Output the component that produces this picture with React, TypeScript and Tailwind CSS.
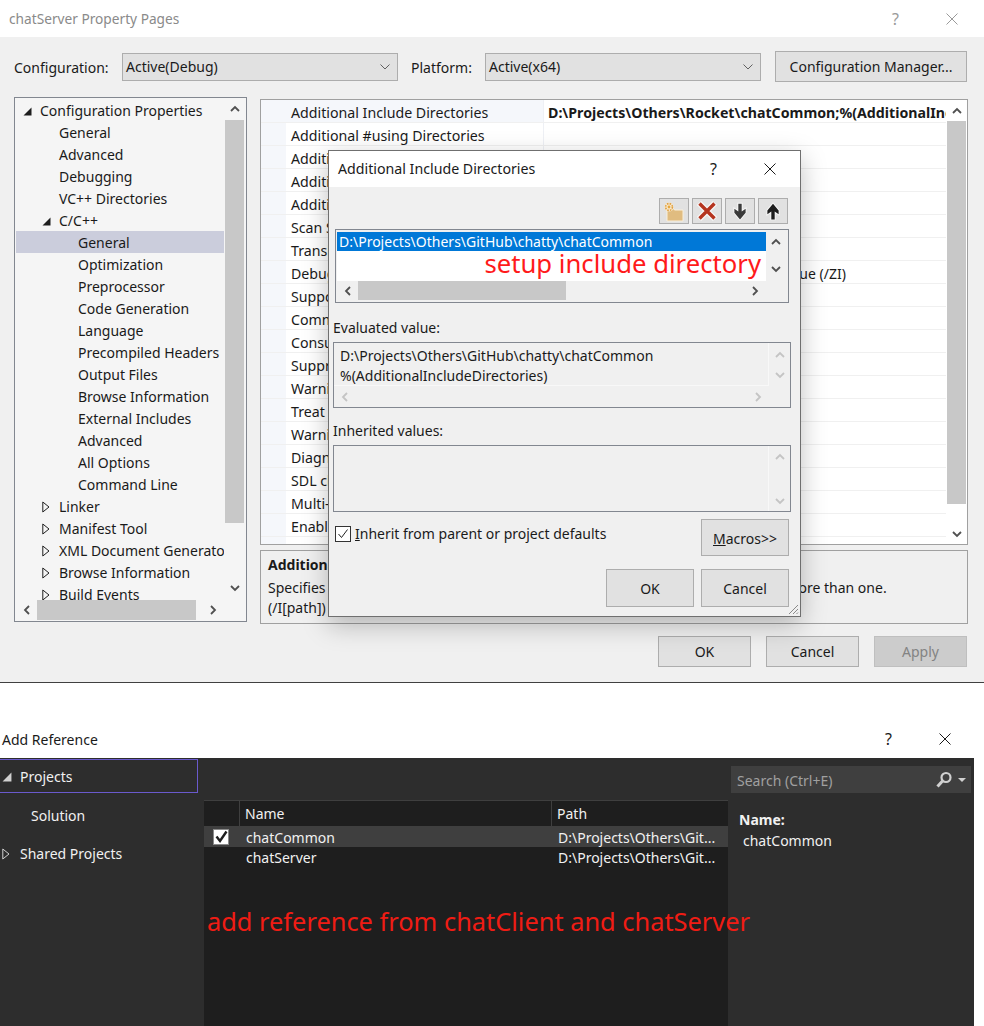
import * as React from "react";

const treeRows: { label: string; indent: number; arrow?: "open" | "closed"; selected?: boolean }[] = [
  { label: "Configuration Properties", indent: 24, arrow: "open" },
  { label: "General", indent: 43 },
  { label: "Advanced", indent: 43 },
  { label: "Debugging", indent: 43 },
  { label: "VC++ Directories", indent: 43 },
  { label: "C/C++", indent: 43, arrow: "open" },
  { label: "General", indent: 62, selected: true },
  { label: "Optimization", indent: 62 },
  { label: "Preprocessor", indent: 62 },
  { label: "Code Generation", indent: 62 },
  { label: "Language", indent: 62 },
  { label: "Precompiled Headers", indent: 62 },
  { label: "Output Files", indent: 62 },
  { label: "Browse Information", indent: 62 },
  { label: "External Includes", indent: 62 },
  { label: "Advanced", indent: 62 },
  { label: "All Options", indent: 62 },
  { label: "Command Line", indent: 62 },
  { label: "Linker", indent: 43, arrow: "closed" },
  { label: "Manifest Tool", indent: 43, arrow: "closed" },
  { label: "XML Document Generator", indent: 43, arrow: "closed" },
  { label: "Browse Information", indent: 43, arrow: "closed" },
  { label: "Build Events", indent: 43, arrow: "closed" },
];

const gridRows = [
  "Additional Include Directories",
  "Additional #using Directories",
  "Additional BMI Directories",
  "Additional Module Dependencies",
  "Additional Header Unit Dependencies",
  "Scan Sources for Module Dependencies",
  "Translate Includes to Imports",
  "Debug Information Format",
  "Support Just My Code Debugging",
  "Common Language RunTime Support",
  "Consume Windows Runtime Extension",
  "Suppress Startup Banner",
  "Warning Level",
  "Treat Warnings As Errors",
  "Warning Version",
  "Diagnostics Format",
  "SDL checks",
  "Multi-processor Compilation",
  "Enable Address Sanitizer",
  "Enable Fuzzer Support",
];

function Chevron({ dir, color = "#505050", size = 10 }: { dir: "up" | "down" | "left" | "right"; color?: string; size?: number }) {
  const d = {
    up: "M1 7 L5 3 L9 7",
    down: "M1 3 L5 7 L9 3",
    left: "M7 1 L3 5 L7 9",
    right: "M3 1 L7 5 L3 9",
  }[dir];
  return (
    <svg width={size} height={size} viewBox="0 0 10 10" fill="none">
      <path d={d} stroke={color} strokeWidth="1.8" />
    </svg>
  );
}

function Triangle({ open, color = "#1e1e1e", size = 9 }: { open: boolean; color?: string; size?: number }) {
  return open ? (
    <svg width={size} height={size} viewBox="0 0 9 9">
      <path d="M8.5 0.5 V8.5 H0.5 Z" fill={color} />
    </svg>
  ) : (
    <svg width="8" height="12" viewBox="0 0 8 12" fill="none">
      <path d="M0.8 1 L7 6 L0.8 11 Z" stroke={color} strokeWidth="1" />
    </svg>
  );
}

function SelectBox({ value, className }: { value: string; className: string }) {
  return (
    <div className={`flex h-[28px] items-center justify-between border border-[#adadad] bg-[#e1e1e1] pl-[3px] pr-[6px] ${className}`}>
      <span className="pt-[1px]">{value}</span>
      <svg width="12" height="8" viewBox="0 0 12 8" fill="none">
        <path d="M1.5 1.5 L6 6 L10.5 1.5" stroke="#606060" strokeWidth="1" />
      </svg>
    </div>
  );
}

function Btn({ label, className, disabled }: { label: React.ReactNode; className: string; disabled?: boolean }) {
  return (
    <div
      className={`flex items-center justify-center border ${disabled ? "border-[#bfbfbf] bg-[#cccccc] text-[#838383]" : "border-[#adadad] bg-[#e1e1e1]"} ${className}`}
    >
      {label}
    </div>
  );
}

function TitleButtons({ muted, className }: { muted?: boolean; className: string }) {
  const color = muted ? "#9a9a9a" : "#1a1a1a";
  return (
    <div className={`flex items-center ${className}`}>
      <span className="text-[16px]" style={{ color }}>
        ?
      </span>
      <svg width="12" height="12" viewBox="0 0 12 12" fill="none" className="ml-[47px]">
        <path d="M0.5 0.5 L11.5 11.5 M11.5 0.5 L0.5 11.5" stroke={color} strokeWidth="1" />
      </svg>
    </div>
  );
}

function ToolButton({ children }: { children: React.ReactNode }) {
  return <div className="flex h-[26px] w-[30px] items-center justify-center border border-[#adadad] bg-[#e1e1e1]">{children}</div>;
}

function App() {
  return (
    <div className="h-[1026px] w-[984px] overflow-hidden bg-white text-[14px] leading-none text-[#1a1a1a] [font-family:'Noto_Sans',sans-serif]">
      {/* property pages */}
      <div className="relative flex h-[683px] flex-col border-b border-[#404040] bg-[#f0f0f0]">
        <div className="flex h-[37px] shrink-0 items-center justify-between bg-white pl-[9px] pr-[26px] text-[13.7px] text-[#8a8a8a]">
          <span>chatServer Property Pages</span>
          <TitleButtons muted className="" />
        </div>

        <div className="mt-[14px] flex h-[31px] items-center pl-[14px]">
          <span className="w-[108px] pt-[2px]">Configuration:</span>
          <SelectBox value="Active(Debug)" className="w-[276px]" />
          <span className="ml-[13px] w-[74px] pt-[2px]">Platform:</span>
          <SelectBox value="Active(x64)" className="w-[276px]" />
          <Btn label="Configuration Manager..." className="ml-[14px] h-[31px] w-[192px]" />
        </div>

        <div className="mt-[15px] flex items-start pl-[14px]">
          {/* tree */}
          <div className="flex h-[525px] w-[233px] shrink-0 flex-col border border-[#828790] bg-[#f5f5f5]">
            <div className="flex h-[502px] pl-[1px] pr-[2px]">
              <div className="h-full w-[208px] overflow-hidden pt-[1px]">
                {treeRows.map((row, i) => (
                  <div
                    key={i}
                    className={`relative flex h-[22px] items-center whitespace-nowrap pt-[2px] ${row.selected ? "bg-[#cbcddc]" : ""}`}
                    style={{ paddingLeft: row.indent }}
                  >
                    {row.arrow && (
                      <span className="absolute flex w-[10px] justify-center" style={{ left: row.indent - 18 }}>
                        <Triangle open={row.arrow === "open"} />
                      </span>
                    )}
                    {row.label}
                  </div>
                ))}
              </div>
              <div className="ml-[1px] flex h-full w-[19px] flex-col items-center">
                <div className="flex h-[22px] items-center">
                  <Chevron dir="up" />
                </div>
                <div className="h-[403px] w-full bg-[#c8c8c8]" />
                <div className="flex flex-1 items-end pb-[7px]">
                  <Chevron dir="down" />
                </div>
              </div>
            </div>
            <div className="ml-[1px] flex h-[20px] w-[208px] items-center">
              <div className="flex w-[21px] justify-center">
                <Chevron dir="left" />
              </div>
              <div className="h-full w-[159px] bg-[#c8c8c8]" />
              <div className="flex flex-1 justify-center pl-[6px]">
                <Chevron dir="right" />
              </div>
            </div>
          </div>

          <div className="ml-[13px] mt-[2px] w-[708px]">
            {/* grid */}
            <div className="flex h-[446px] border border-[#a0a0a0] bg-white">
              <div className="h-full w-[685px] overflow-hidden">
                {gridRows.map((name, i) => (
                  <div key={name} className="flex h-[23px] border-b border-[#f0f0f0]">
                    <div className="h-full w-[25px] shrink-0 bg-[#f5f7fb]" />
                    <div
                      className={`flex w-[258px] shrink-0 items-center whitespace-nowrap border-r border-[#eef0f5] pl-[5px] pt-[4px] text-[14.2px] ${i === 0 ? "bg-[#f5f7fb]" : ""}`}
                    >
                      {name}
                    </div>
                    {i === 0 && (
                      <div className="flex items-center overflow-hidden whitespace-nowrap pl-[4px] pt-[4px] text-[14.2px] font-bold">
                        {"D:\\Projects\\Others\\Rocket\\chatCommon;%(AdditionalIncludeDirectories)"}
                      </div>
                    )}
                    {i === 7 && <div className="flex items-center whitespace-nowrap pl-[4px] pt-[4px]">Program Database for Edit And Continue (/ZI)</div>}
                  </div>
                ))}
              </div>
              <div className="ml-[1px] flex h-full w-[19px] flex-col items-center">
                <div className="flex h-[21px] items-center">
                  <Chevron dir="up" />
                </div>
                <div className="h-[383px] w-full bg-[#c8c8c8]" />
                <div className="flex flex-1 items-end pb-[5px]">
                  <Chevron dir="down" />
                </div>
              </div>
            </div>
            {/* description */}
            <div className="mt-[5px] h-[74px] border border-[#a0a0a0] pl-[7px] pt-[7px]">
              <div className="font-bold">Additional Include Directories</div>
              <div className="mt-[9px] whitespace-nowrap">Specifies one or more directories to add to the include path; separate using ; if more than one.</div>
              <div className="mt-[6px]">(/I[path])</div>
            </div>
          </div>
        </div>

        <div className="mt-[12px] flex justify-end pr-[17px]">
          <Btn label="OK" className="h-[31px] w-[93px]" />
          <Btn label="Cancel" className="ml-[15px] h-[31px] w-[93px]" />
          <Btn label="Apply" disabled className="ml-[15px] h-[31px] w-[93px]" />
        </div>

        {/* modal over the property pages */}
        <div className="absolute left-[328px] top-[150px] h-[467px] w-[473px] border border-[#6f6f6f] bg-[#f0f0f0] px-[4px] shadow-[0_8px_24px_rgba(0,0,0,0.25)]">
          <div className="-mx-[4px] flex h-[36px] items-center justify-between bg-white pl-[9px] pr-[24px]">
            <span className="text-[14.2px]">Additional Include Directories</span>
            <TitleButtons className="" />
          </div>
          <div className="mt-[11px] flex justify-end gap-[3px] pr-[8px]">
            <ToolButton>
              <svg width="24" height="22" viewBox="0 0 24 22">
                <path d="M5 8 H11 L12.5 10 H21 V21 H5 Z" fill="#e0bc80" stroke="#f8efdc" strokeWidth="1" />
                <circle cx="7" cy="7" r="4.6" fill="#f6e8cf" />
                <circle cx="7" cy="7" r="3.4" fill="none" stroke="#e0a040" strokeWidth="1.6" strokeDasharray="1.6 1.1" />
                <circle cx="7" cy="7" r="1.4" fill="#e8a83c" />
              </svg>
            </ToolButton>
            <ToolButton>
              <svg width="22" height="22" viewBox="0 0 22 22">
                <path d="M3 3 L19 19 M19 3 L3 19" stroke="#f8f8f8" strokeWidth="6" />
                <path d="M3.5 3.5 L18.5 18.5 M18.5 3.5 L3.5 18.5" stroke="#b5341f" strokeWidth="3.4" />
              </svg>
            </ToolButton>
            <ToolButton>
              <svg width="18" height="23" viewBox="0 0 16 20">
                <path d="M6.5 3 H9.5 V10 L13 7.5 V11 L8 17 L3 11 V7.5 L6.5 10 Z" fill="#3a3a3a" stroke="#f8f8f8" strokeWidth="1.6" paintOrder="stroke" />
              </svg>
            </ToolButton>
            <ToolButton>
              <svg width="18" height="23" viewBox="0 0 16 20">
                <path d="M6.5 17 H9.5 V10 L13 12.5 V9 L8 3 L3 9 V12.5 L6.5 10 Z" fill="#1e1e1e" stroke="#f8f8f8" strokeWidth="1.6" paintOrder="stroke" />
              </svg>
            </ToolButton>
          </div>

          <div className="ml-[2px] mt-[5px] flex h-[74px] w-[454px] border border-[#828790] bg-[#f0f0f0]">
            <div className="w-[431px] shrink-0">
              <div className="ml-[1px] mt-[2px] flex h-[19px] w-[429px] items-center bg-[#0078d7] pl-[2px] text-white">
                {"D:\\Projects\\Others\\GitHub\\chatty\\chatCommon"}
              </div>
              <div className="ml-[1px] flex h-[30px] w-[429px] items-center justify-end bg-white pb-[4px] pr-[5px] text-[25.7px] text-[#ff1a1a]">setup include directory</div>
              <div className="ml-[1px] flex h-[19px] w-[423px] items-center">
                <div className="flex w-[21px] justify-center">
                  <Chevron dir="left" />
                </div>
                <div className="h-full w-[208px] bg-[#c8c8c8]" />
                <div className="flex flex-1 justify-end">
                  <Chevron dir="right" />
                </div>
              </div>
            </div>
            <div className="flex-1 pr-[4px] pt-[7px]">
              <div className="flex h-[37px] flex-col items-center justify-between">
                <Chevron dir="up" />
                <Chevron dir="down" />
              </div>
            </div>
          </div>

          <div className="mt-[18px] h-[14px]">Evaluated value:</div>
          <div className="mt-[7px] flex h-[66px] w-[458px] flex-col border border-[#828790]">
            <div className="flex h-[43px]">
              <div className="flex flex-1 flex-col gap-[6px] border-b border-r border-[#f8f8f8] pl-[6px] pt-[6px]">
                <span>{"D:\\Projects\\Others\\GitHub\\chatty\\chatCommon"}</span>
                <span>%(AdditionalIncludeDirectories)</span>
              </div>
              <div className="flex w-[21px] flex-col items-center gap-[10px] pt-[7px]">
                <Chevron dir="up" color="#c4c4c4" />
                <Chevron dir="down" color="#c4c4c4" />
              </div>
            </div>
            <div className="flex flex-1 items-center justify-between pl-[6px] pr-[27px]">
              <Chevron dir="left" color="#c4c4c4" />
              <Chevron dir="right" color="#c4c4c4" />
            </div>
          </div>

          <div className="mt-[16px] h-[14px]">Inherited values:</div>
          <div className="mt-[7px] flex h-[67px] w-[458px] justify-end border border-[#828790]">
            <div className="flex h-full w-[22px] flex-col items-center justify-between border-l border-[#f8f8f8] pb-[5px] pt-[6px]">
              <Chevron dir="up" color="#c4c4c4" />
              <Chevron dir="down" color="#c4c4c4" />
            </div>
          </div>

          <div className="mt-[7px] flex h-[37px] w-[456px] items-start justify-between">
            <div className="flex items-center pl-[2px] pt-[7px]">
              <div className="flex h-[16px] w-[16px] items-center justify-center border border-[#333333] bg-white">
                <svg width="12" height="12" viewBox="0 0 12 12" fill="none">
                  <path d="M1.5 6 L4.5 9.5 L10.5 1.5" stroke="#222222" strokeWidth="1" />
                </svg>
              </div>
              <span className="ml-[4px]">
                <span className="underline">I</span>nherit from parent or project defaults
              </span>
            </div>
            <Btn
              label={
                <span className="pt-[2px]">
                  <span className="underline">M</span>acros&gt;&gt;
                </span>
              }
              className="h-[37px] w-[88px]"
            />
          </div>

          <div className="mt-[13px] flex w-[456px] justify-end gap-[7px]">
            <Btn label={<span className="pt-[2px]">OK</span>} className="h-[38px] w-[88px]" />
            <Btn label={<span className="pt-[2px]">Cancel</span>} className="h-[38px] w-[88px]" />
          </div>

          <svg width="12" height="12" viewBox="0 0 12 12" className="absolute bottom-[1px] right-[1px]" fill="none">
            <path d="M11 2 L2 11 M11 6 L6 11 M11 9.5 L9.5 11" stroke="#8a8a8a" strokeWidth="1" />
          </svg>
        </div>
      </div>

      {/* add reference */}
      <div className="relative">
        <div className="flex h-[75px] items-end justify-between pb-[8px] pl-[2px] pr-[33px]">
          <span className="pb-[3px]">Add Reference</span>
          <TitleButtons className="pb-[3px]" />
        </div>
        <div className="flex h-[268px] w-[974px] bg-[#2d2d2d] text-[#f1f1f1]">
          <div className="w-[204px] shrink-0 pt-[1px]">
            <div className="relative flex h-[34px] w-[198px] items-center border-y border-r border-[#6a5acd] pl-[20px] pt-[2px]">
              <span className="absolute left-[2px] top-[12px] flex">
                <Triangle open color="#d0d0d0" size={10} />
              </span>
              Projects
            </div>
            <div className="mt-[4px] flex h-[38px] items-center pl-[31px]">Solution</div>
            <div className="relative flex h-[38px] items-center pl-[20px]">
              <span className="absolute left-[2px] flex">
                <Triangle open={false} color="#d0d0d0" />
              </span>
              Shared Projects
            </div>
          </div>

          <div className="flex w-[524px] shrink-0 flex-col pt-[42px]">
            <div className="flex h-[26px] border-t border-[#3f3f3f] bg-[#1e1e1e]">
              <div className="w-[36px] border-r border-[#3f3f3f]" />
              <div className="flex w-[312px] items-center border-r border-[#3f3f3f] pl-[5px] pt-[1px]">Name</div>
              <div className="flex items-center pl-[5px] pt-[1px]">Path</div>
            </div>
            <div className="flex-1 bg-[#1e1e1e]">
              <div className="flex h-[21px] items-center bg-[#3f3f3f]">
                <div className="ml-[9px] flex h-[16px] w-[16px] items-center justify-center border border-[#8a8a8a] bg-white">
                  <svg width="13" height="13" viewBox="0 0 13 13" fill="none">
                    <path d="M1.5 6.5 L5 11 L11.5 1.5" stroke="#1e1e1e" strokeWidth="2.4" />
                  </svg>
                </div>
                <span className="ml-[17px] w-[312px] pt-[2px]">chatCommon</span>
                <span className="pt-[2px]">{"D:\\Projects\\Others\\Git..."}</span>
              </div>
              <div className="flex h-[21px] items-center">
                <span className="ml-[42px] w-[312px]">chatServer</span>
                <span>{"D:\\Projects\\Others\\Git..."}</span>
              </div>
            </div>
          </div>

          <div className="flex-1 pl-[3px] pr-[3px] pt-[8px]">
            <div className="flex h-[27px] items-center justify-between bg-[#3f3f3f] pl-[6px] pr-[5px] text-[#a0a0a0]">
              <span className="pt-[2px]">Search (Ctrl+E)</span>
              <div className="flex items-center gap-[5px]">
                <svg width="18" height="18" viewBox="0 0 18 18" fill="none">
                  <circle cx="11" cy="6.5" r="4.5" stroke="#d0d0d0" strokeWidth="2.2" />
                  <path d="M7.5 10 L2.5 15.5" stroke="#d0d0d0" strokeWidth="3" />
                </svg>
                <svg width="8" height="4" viewBox="0 0 8 4">
                  <path d="M0 0 H8 L4 4 Z" fill="#d0d0d0" />
                </svg>
              </div>
            </div>
            <div className="ml-[8px] mt-[20px] font-bold">Name:</div>
            <div className="ml-[12px] mt-[7px]">chatCommon</div>
          </div>
        </div>
        <span className="absolute left-[207px] top-[226px] whitespace-nowrap text-[25.4px] text-[#f01c14]">add reference from chatClient and chatServer</span>
      </div>
    </div>
  );
}

export default App;
